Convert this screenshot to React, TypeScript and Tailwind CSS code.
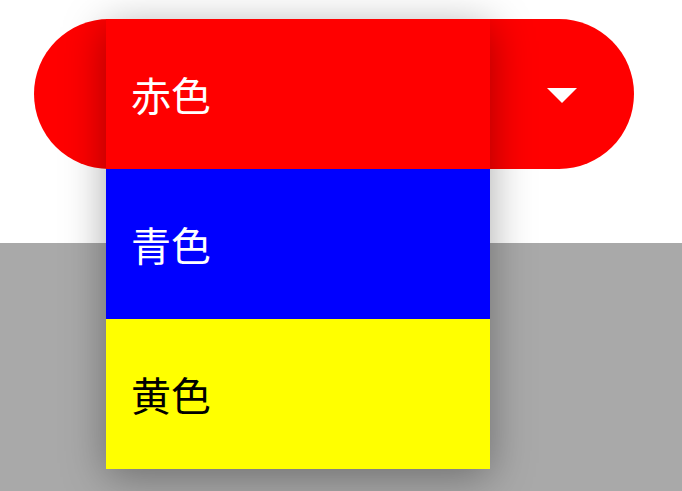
import React from 'react';

const options = [
    { label: '赤色', bg: 'bg-[#ff0000]', fg: 'text-white' },
    { label: '青色', bg: 'bg-[#0000ff]', fg: 'text-white' },
    { label: '黄色', bg: 'bg-[#ffff00]', fg: 'text-black' },
];

export default function App() {
    return (
        <div
            className="relative w-full h-[491px] overflow-hidden flex flex-col"
            style={{ fontFamily: '"Noto Sans CJK JP", "Noto Sans", sans-serif' }}
        >
            <div className="h-[243px] bg-white pt-[19px] pl-[34px]">
                <div className="w-[600px] h-[150px] rounded-full bg-[#ff0000] flex items-center justify-end pr-[57px]">
                    <span className="w-0 h-0 mt-[3px] border-l-[15px] border-r-[15px] border-t-[15px] border-l-transparent border-r-transparent border-t-white" />
                </div>
            </div>
            <div className="flex-1 bg-[#a9a9a9]" />

            {/* open menu */}
            <ul className="absolute left-[106px] top-[19px] w-[384px] flex flex-col shadow-[0_8px_40px_rgba(0,0,0,0.35)]">
                {options.map((o) => (
                    <li
                        key={o.label}
                        className={`h-[150px] flex items-center pl-[25px] text-[40px] leading-none ${o.bg} ${o.fg}`}
                    >
                        {o.label}
                    </li>
                ))}
            </ul>
        </div>
    );
}
